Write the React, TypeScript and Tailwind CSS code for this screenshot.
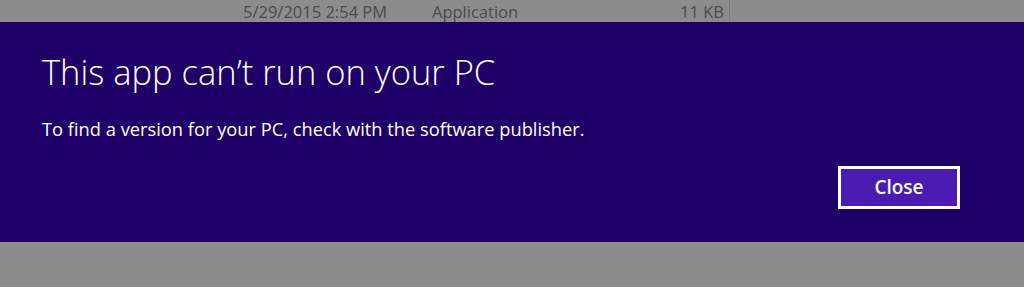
export default function App() {
  return (
    <div className="h-[287px] w-[1024px] overflow-hidden bg-[#8c8c8c] font-['Open_Sans',sans-serif]">
      {/* file list row behind the dialog */}
      <div className="flex h-[22px] items-end text-[16.5px] text-[#4b4b4b]">
        <span className="ml-[243px] w-[189px] whitespace-nowrap leading-[21px]">5/29/2015 2:54 PM</span>
        <span className="w-[150px] leading-[21px]">Application</span>
        <span className="h-[22px] w-[148px] border-r border-[#7e7e7e] pr-[5px] pt-[1px] text-right leading-[21px]">11 KB</span>
      </div>

      {/* dialog band */}
      <div className="flex h-[220px] flex-col bg-[#1f0068] px-[42px] text-white">
        <h1 className="mt-[28px] text-[34.5px] font-light leading-[44px]">This app can’t run on your PC</h1>
        <p className="mt-[23px] text-[18.3px] leading-[24px]">
          To find a version for your PC, check with the software publisher.
        </p>
        <div className="mt-[25px] flex justify-end pr-[22px]">
          <button className="h-[43px] w-[122px] border-[3px] border-white bg-[#4a1cb4] text-[19px] font-semibold text-white">
            Close
          </button>
        </div>
      </div>
    </div>
  );
}
